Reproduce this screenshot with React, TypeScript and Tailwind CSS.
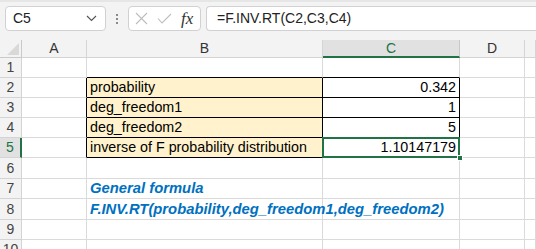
import React from 'react';

const cols = ['A', 'B', 'C', 'D', ''];

type Cell = { text?: string; right?: boolean; fill?: boolean; blue?: boolean };

const rows: Record<number, Record<string, Cell>> = {
  2: { B: { text: 'probability', fill: true }, C: { text: '0.342', right: true } },
  3: { B: { text: 'deg_freedom1', fill: true }, C: { text: '1', right: true } },
  4: { B: { text: 'deg_freedom2', fill: true }, C: { text: '5', right: true } },
  5: { B: { text: 'inverse of F probability distribution', fill: true }, C: { text: '1.10147179', right: true } },
  7: { B: { text: 'General formula', blue: true } },
  8: { B: { text: 'F.INV.RT(probability,deg_freedom1,deg_freedom2)', blue: true } },
};

const rowHeights = ['h-[20px]', 'h-[20px]', 'h-[20px]', 'h-[20px]', 'h-[20px]', 'h-[21px]', 'h-[20px]', 'h-[21px]', 'h-[20px]', 'h-[20px]'];

function inTable(r: number, c: string) {
  return r >= 2 && r <= 5 && (c === 'B' || c === 'C');
}

const App: React.FC = () => {
  return (
    <div className="w-[536px] h-[249px] overflow-hidden bg-white" style={{ fontFamily: '"Liberation Sans", Arial, sans-serif' }}>
      {/* formula bar */}
      <div className="h-[40px] bg-[#f3f3f3] border-t-[2px] border-[#e6e6e6] flex items-start pt-[4px] pl-[5px] gap-0">
        <div className="w-[101px] h-[25px] bg-white border border-[#d1d1d1] rounded-[4px] flex items-center justify-between pl-[7px] pr-[8px] text-[14px] text-[#222]">
          <span>C5</span>
          <svg width="11" height="7" viewBox="0 0 11 7"><path d="M1 1l4.5 4.5L10 1" fill="none" stroke="#555" strokeWidth="1.2" /></svg>
        </div>
        <div className="w-[22px] h-[25px] flex flex-col items-center justify-center gap-[2px]">
          <span className="w-[2px] h-[2px] bg-[#8a8a8a]" />
          <span className="w-[2px] h-[2px] bg-[#8a8a8a]" />
          <span className="w-[2px] h-[2px] bg-[#8a8a8a]" />
        </div>
        <div className="w-[73px] h-[25px] bg-white border border-[#d1d1d1] rounded-[4px] flex items-center pl-[6px] gap-[9px]">
          <svg width="13" height="13" viewBox="0 0 13 13"><path d="M1 1l11 11M12 1L1 12" stroke="#bdbdbd" strokeWidth="1.1" /></svg>
          <svg width="15" height="11" viewBox="0 0 15 11"><path d="M1 5.5l4 4.5L14 1" fill="none" stroke="#bdbdbd" strokeWidth="1.1" /></svg>
          <span className="text-[17px] italic text-[#333] leading-none" style={{ fontFamily: '"Liberation Serif", serif' }}>fx</span>
        </div>
        <div className="flex-1 ml-[5px] h-[25px] bg-white border border-[#d1d1d1] border-r-0 rounded-l-[4px] flex items-center pl-[10px] text-[14px] text-[#222]">
          =F.INV.RT(C2,C3,C4)
        </div>
      </div>

      {/* sheet */}
      <div className="grid grid-cols-[22px_65px_236px_137px_65px_1fr] text-[14.3px]">
        {/* header */}
        <div className="h-[18px] bg-[#f3f3f3] border-r border-b border-[#c9c9c9] relative overflow-hidden">
          <svg className="absolute right-[2px] bottom-[2px]" width="12" height="12" viewBox="0 0 12 12"><path d="M12 0V12H0Z" fill="#d9d9d9" /></svg>
        </div>
        {cols.map((c) => (
          <div
            key={c || 'e'}
            className={
              c === 'C'
                ? 'h-[18px] bg-[#e1e1e1] border-r border-[#c9c9c9] border-b-[2px] border-b-[#217346] text-[#217346] flex items-center justify-center text-[14px]'
                : 'h-[18px] bg-[#f3f3f3] border-r border-b border-[#d4d4d4] text-[#333] flex items-center justify-center text-[14px]'
            }
          >
            {c}
          </div>
        ))}

        {rowHeights.map((h, i) => {
          const r = i + 1;
          return (
            <React.Fragment key={r}>
              <div
                className={
                  r === 5
                    ? `${h} bg-[#e1e1e1] border-r-[2px] border-r-[#217346] border-b border-[#d4d4d4] text-[#217346] flex items-center justify-center text-[14px]`
                    : `${h} bg-[#f3f3f3] border-r border-b border-[#d4d4d4] text-[#444] flex items-center justify-center text-[14px]`
                }
              >
                {r}
              </div>
              {cols.map((c) => {
                const cell = rows[r]?.[c];
                const t = inTable(r, c);
                const rightBlack = t || (r >= 2 && r <= 5 && c === 'A');
                const bottomBlack = t || (r === 1 && (c === 'B' || c === 'C'));
                const cls = [
                  h,
                  'relative flex items-center px-[3px] whitespace-nowrap border-r border-b',
                  rightBlack ? 'border-r-black' : 'border-r-[#dadada]',
                  bottomBlack ? 'border-b-black' : 'border-b-[#dadada]',
                  cell?.fill ? 'bg-[#fff2cc]' : '',
                  cell?.right ? 'justify-end' : '',
                  cell?.blue ? 'text-[#0070c0] text-[14.8px] font-bold italic overflow-visible' : 'text-black',
                ].join(' ');
                return (
                  <div key={c || 'e'} className={cls}>
                    {cell?.blue ? <span className="relative z-10">{cell.text}</span> : cell?.text}
                    {r === 5 && c === 'C' && (
                      <>
                        <div className="absolute -left-[1px] -top-[1px] -right-[1px] -bottom-[1px] border-[2px] border-[#217346] pointer-events-none" />
                        <div className="absolute -right-[4px] -bottom-[4px] w-[6px] h-[6px] bg-[#217346] border border-white z-10" />
                      </>
                    )}
                  </div>
                );
              })}
            </React.Fragment>
          );
        })}
      </div>
    </div>
  );
};

export default App;
